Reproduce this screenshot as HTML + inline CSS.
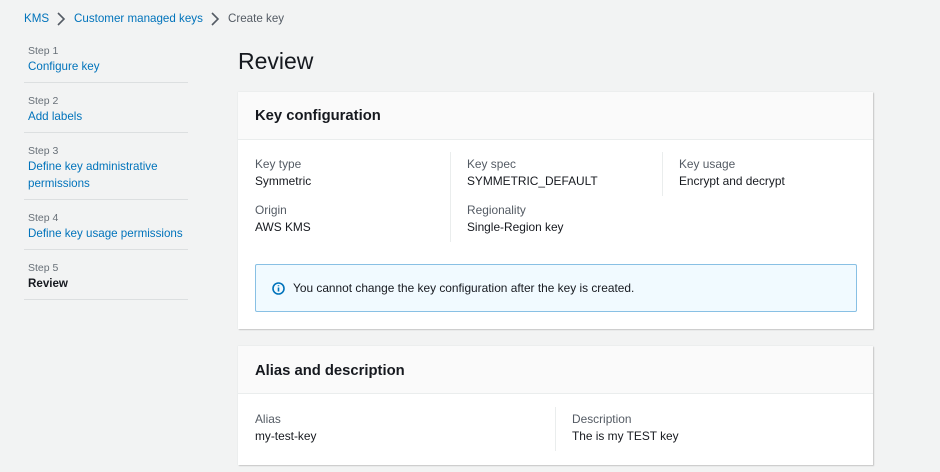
<!DOCTYPE html>
<html><head><meta charset="utf-8"><style>
*{margin:0;padding:0;box-sizing:border-box}
body{width:940px;height:472px;background:#f2f3f3;font-family:"Liberation Sans",sans-serif;position:relative;overflow:hidden;color:#16191f}
.a{position:absolute;white-space:nowrap}
.lnk{color:#0073bb}
.step{font-size:10.5px;color:#687078}
.nv{font-size:11.6px}
.sep{position:absolute;left:24px;width:164px;height:1px;background:#dcdfe0}
.card{position:absolute;left:238px;width:635px;background:#fff;box-shadow:1px 1px 1px #c6c6c6,0 0 1px #d5dbdb}
.hd{position:absolute;left:0;top:0;width:100%;background:#fafafa;border-bottom:1px solid #eaeded}
.h2{font-size:14.8px;font-weight:bold}
.lbl{font-size:11.9px;color:#545b64}
.val{font-size:11.9px}
.vd{position:absolute;width:1px;background:#eaeded}
</style></head><body>
<div class="a nv" style="left:24px;top:12px"><span class="lnk">KMS</span></div>
<svg class="a" style="left:56px;top:12px" width="10" height="14"><path d="M2 1l6 6-6 6" stroke="#545b64" stroke-width="1.6" fill="none"/></svg>
<div class="a nv lnk" style="left:74px;top:12px">Customer managed keys</div>
<svg class="a" style="left:210px;top:12px" width="10" height="14"><path d="M2 1l6 6-6 6" stroke="#545b64" stroke-width="1.6" fill="none"/></svg>
<div class="a nv" style="left:228px;top:12px;color:#545b64">Create key</div>

<div class="a step" style="left:28px;top:45px">Step 1</div>
<div class="a nv lnk" style="left:28px;top:60px">Configure key</div>
<div class="sep" style="top:82px"></div>
<div class="a step" style="left:28px;top:95px">Step 2</div>
<div class="a nv lnk" style="left:28px;top:110px">Add labels</div>
<div class="sep" style="top:132px"></div>
<div class="a step" style="left:28px;top:145px">Step 3</div>
<div class="a nv lnk" style="left:28px;top:160px">Define key administrative</div>
<div class="a nv lnk" style="left:28px;top:177px">permissions</div>
<div class="sep" style="top:199px"></div>
<div class="a step" style="left:28px;top:212px">Step 4</div>
<div class="a nv lnk" style="left:28px;top:227px">Define key usage permissions</div>
<div class="sep" style="top:249px"></div>
<div class="a step" style="left:28px;top:262px">Step 5</div>
<div class="a nv" style="left:28px;top:277px;font-weight:bold">Review</div>
<div class="sep" style="top:299px"></div>

<div class="a" style="left:238px;top:48px;font-size:23px">Review</div>

<div class="card" style="top:92px;height:237px">
<div class="hd" style="height:48px"></div>
<div class="a h2" style="left:17px;top:16px">Key configuration</div>
<div class="a lbl" style="left:17px;top:65px">Key type</div>
<div class="a val" style="left:17px;top:82px">Symmetric</div>
<div class="a lbl" style="left:17px;top:111px">Origin</div>
<div class="a val" style="left:17px;top:128px">AWS KMS</div>
<div class="vd" style="left:212px;top:60px;height:90px"></div>
<div class="a lbl" style="left:229px;top:65px">Key spec</div>
<div class="a val" style="left:229px;top:82px">SYMMETRIC_DEFAULT</div>
<div class="a lbl" style="left:229px;top:111px">Regionality</div>
<div class="a val" style="left:229px;top:128px">Single-Region key</div>
<div class="vd" style="left:424px;top:60px;height:44px"></div>
<div class="a lbl" style="left:441px;top:65px">Key usage</div>
<div class="a val" style="left:441px;top:82px">Encrypt and decrypt</div>
<div class="a" style="left:17px;top:172px;width:602px;height:48px;background:#f1faff;border:1px solid #88c0e4;border-radius:2px"></div>
<svg class="a" style="left:34px;top:190px" width="13" height="13"><circle cx="6.5" cy="6.5" r="5.5" stroke="#0073bb" stroke-width="1.6" fill="none"/><path d="M6.5 5.5v4M6.5 3.3v1" stroke="#0073bb" stroke-width="1.6"/></svg>
<div class="a val" style="left:55px;top:189px">You cannot change the key configuration after the key is created.</div>
</div>

<div class="card" style="top:346px;height:119px">
<div class="hd" style="height:48px"></div>
<div class="a h2" style="left:17px;top:17px">Alias and description</div>
<div class="a lbl" style="left:17px;top:66px">Alias</div>
<div class="a val" style="left:17px;top:83px">my-test-key</div>
<div class="vd" style="left:317px;top:61px;height:44px"></div>
<div class="a lbl" style="left:334px;top:66px">Description</div>
<div class="a val" style="left:334px;top:83px">The is my TEST key</div>
</div>
</body></html>
